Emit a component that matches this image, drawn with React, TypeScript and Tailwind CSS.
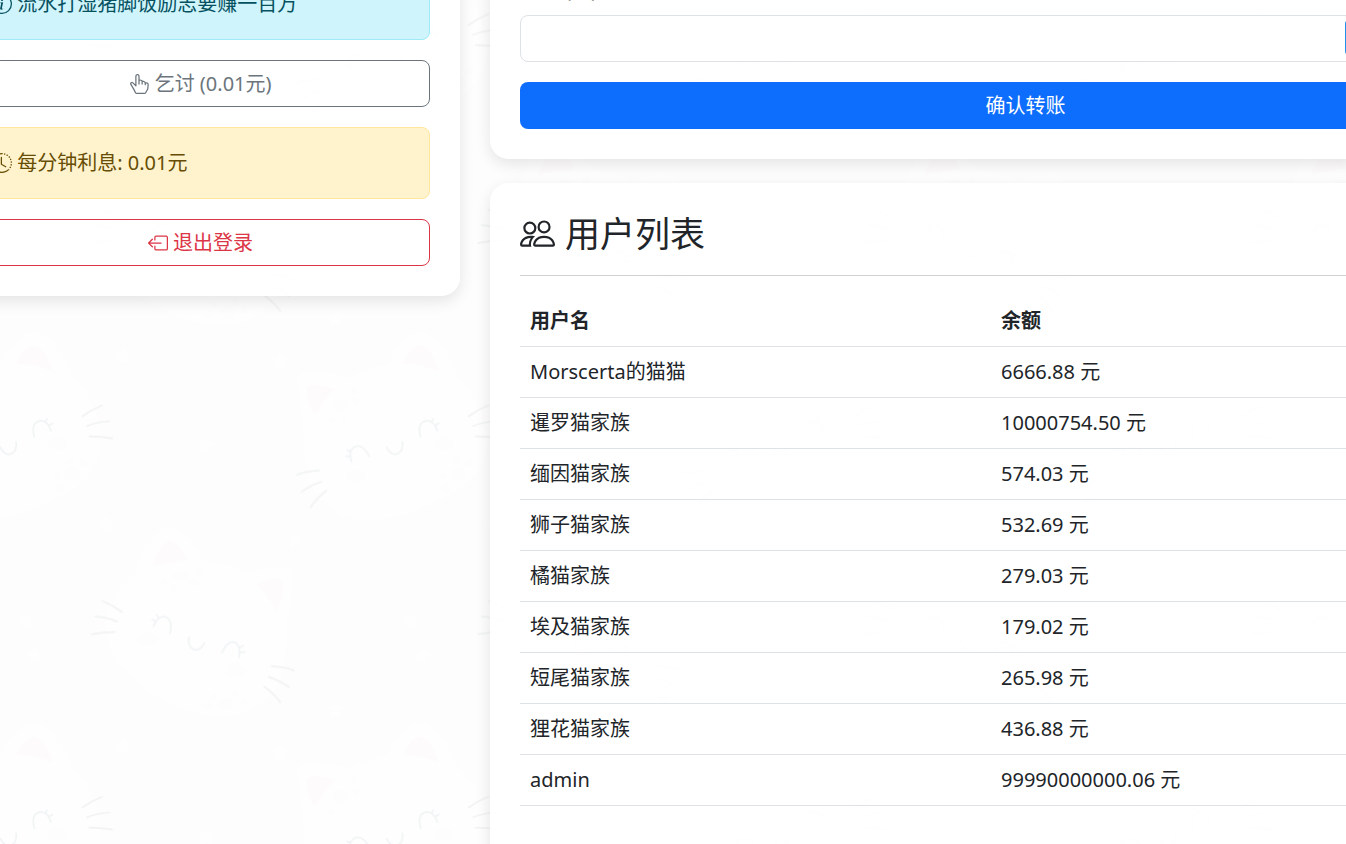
import type { ReactNode } from "react";
import {
  BsBoxArrowLeft,
  BsClockHistory,
  BsHandIndexThumb,
  BsInfoCircle,
  BsPeople,
} from "react-icons/bs";

interface User {
  name: string;
  balance: string;
}

const USERS: User[] = [
  { name: "Morscerta的猫猫", balance: "6666.88" },
  { name: "暹罗猫家族", balance: "10000754.50" },
  { name: "缅因猫家族", balance: "574.03" },
  { name: "狮子猫家族", balance: "532.69" },
  { name: "橘猫家族", balance: "279.03" },
  { name: "埃及猫家族", balance: "179.02" },
  { name: "短尾猫家族", balance: "265.98" },
  { name: "狸花猫家族", balance: "436.88" },
  { name: "admin", balance: "99990000000.06" },
];

const STARS = [
  [370, 165],
  [840, 183],
  [616, 435],
  [318, 670],
  [887, 717],
  [1235, 960],
  [76, 960],
  [105, 1065],
  [1008, 54],
];

// Repeating wallpaper: two sleeping cats and a few stars per tile
function CatWallpaper() {
  return (
    <svg aria-hidden="true" className="absolute inset-0 -z-10 h-full w-full">
      <defs>
        <g id="cats" strokeLinecap="round" strokeLinejoin="round" fill="none">
          <path
            fill="#fefefe"
            d="M892 250Q890 212 930 212Q990 212 1045 232Q1100 205 1160 192Q1200 100 1265 95Q1320 95 1375 225Q1460 310 1462 430Q1460 530 1340 590Q1200 665 1080 662Q960 640 925 540Q910 470 912 410Q905 330 892 250Z"
          />
          <path
            fill="#fefefe"
            d="M400 820Q450 690 505 678Q560 680 612 780Q690 790 735 817Q800 795 850 800Q885 805 880 850Q875 920 862 970Q865 1080 840 1150Q780 1250 660 1250Q500 1240 400 1140Q320 1080 312 960Q320 900 400 820Z"
          />
          <path
            fill="#fefbfc"
            d="M1208 190Q1240 130 1268 138Q1300 155 1315 213Q1260 190 1208 190ZM920 265Q940 245 1003 267Q965 305 945 347Q920 310 920 265ZM456 800Q485 725 510 722Q540 735 562 780Q500 785 456 800ZM768 855Q810 830 845 840Q855 880 828 937Q808 885 768 855Z"
          />
          <g fill="#fdfdfd">
            <ellipse cx="1332" cy="430" rx="28" ry="18" />
            <ellipse cx="1068" cy="528" rx="28" ry="18" />
            <ellipse cx="442" cy="1018" rx="26" ry="20" />
            <ellipse cx="707" cy="1112" rx="27" ry="20" />
            <ellipse cx="1375" cy="522" rx="22" ry="18" />
            <circle cx="1370" cy="484" r="9" />
            <circle cx="1408" cy="486" r="10" />
            <circle cx="1330" cy="528" r="9" />
            <circle cx="1338" cy="563" r="10" />
            <ellipse cx="1022" cy="318" rx="22" ry="20" />
            <circle cx="1058" cy="272" r="9" />
            <circle cx="1068" cy="302" r="8" />
            <circle cx="995" cy="362" r="9" />
            <circle cx="1032" cy="355" r="8" />
            <ellipse cx="680" cy="1212" rx="22" ry="18" />
            <ellipse cx="622" cy="1218" rx="12" ry="8" />
            <circle cx="640" cy="1188" r="8" />
            <circle cx="702" cy="1180" r="9" />
            <circle cx="732" cy="1204" r="9" />
            <ellipse cx="542" cy="828" rx="24" ry="16" />
            <circle cx="492" cy="846" r="10" />
            <circle cx="598" cy="816" r="10" />
            <circle cx="582" cy="848" r="10" />
            <circle cx="522" cy="864" r="9" />
          </g>
          <path
            stroke="#f1f4f5"
            strokeWidth="5"
            d="M1262 411Q1250 368 1280 362Q1302 361 1312 392M1295 366L1300 357M1305 376L1317 370M1055 485Q1042 445 1072 438Q1092 437 1108 469M1052 455L1042 450M1052 468L1039 469M1160 442Q1172 465 1188 463Q1212 457 1207 426M461 979Q472 948 494 950Q520 956 510 1000M464 963L456 957M475 952L470 944M666 1058Q680 1025 700 1026Q724 1032 717 1073M720 1042L730 1037M722 1057L734 1057M567 1012Q562 1045 587 1050Q603 1050 613 1029"
          />
          <path
            stroke="#f2f3f3"
            strokeWidth="5"
            d="M1406 349Q1435 328 1466 316M1420 378Q1450 366 1487 364M1427 409Q1465 409 1496 415M890 525Q920 513 957 512M905 576Q930 556 965 545M932 621Q950 595 979 572M307 903Q340 916 366 936M286 950Q320 952 352 965M276 1003Q310 996 344 996M815 1099Q850 1100 882 1112M807 1131Q845 1145 867 1162M793 1160Q825 1184 841 1207"
          />
        </g>
        <pattern
          id="wallpaper"
          width="1159"
          height="1174"
          patternUnits="userSpaceOnUse"
          patternTransform="translate(0 300) scale(0.3333)"
        >
          <rect width="1159" height="1174" fill="#fdfdfd" />
          {STARS.map(([x, y]) => (
            <path
              key={`${x}-${y}`}
              transform={`translate(${x} ${y})`}
              fill="#fefefe"
              d="M0 -30L9 -11L30 -8L15 8L18 29L0 19L-18 29L-15 8L-30 -8L-9 -11Z"
            />
          ))}
          <use href="#cats" />
          <use href="#cats" x="-1159" />
          <use href="#cats" y="-1174" />
        </pattern>
      </defs>
      <rect width="100%" height="100%" fill="url(#wallpaper)" />
    </svg>
  );
}

function Card({ children }: { children: ReactNode }) {
  return (
    <section className="rounded-[19px] bg-white/90 p-[30px] shadow-[0_5px_15px_rgba(0,0,0,0.1)]">
      {children}
    </section>
  );
}

function AccountPanel() {
  return (
    <Card>
      <div className="flex flex-col gap-5">
        <div className="rounded-lg border border-[#9eeaf9] bg-[#cff4fc] p-5 text-[#055160]">
          <BsInfoCircle className="inline align-[-3px]" /> 流水打湿猪脚饭励志要赚一百万
        </div>
        <button
          type="button"
          className="rounded-lg border border-[#6c757d] px-4 py-2 leading-[29px] text-[#6c757d]"
        >
          <BsHandIndexThumb className="inline align-[-3px]" /> 乞讨 (0.01元)
        </button>
        <div className="rounded-lg border border-[#ffe69c] bg-[#fff3cd] p-5 text-[#664d03]">
          <BsClockHistory className="inline align-[-3px]" /> 每分钟利息: 0.01元
        </div>
        <button
          type="button"
          className="rounded-lg border border-[#dc3545] px-4 py-2 leading-[29px] text-[#dc3545]"
        >
          <BsBoxArrowLeft className="inline align-[-3px]" /> 退出登录
        </button>
      </div>
    </Card>
  );
}

function TransferForm() {
  return (
    <Card>
      <form onSubmit={(e) => e.preventDefault()}>
        <label htmlFor="amount" className="mb-[10px] block">
          金额 (元)
        </label>
        <div className="relative mb-5">
          <input
            id="amount"
            type="number"
            className="block h-[47px] w-full rounded-lg border border-[#dee2e6] bg-white px-4"
          />
          <span className="absolute top-[5px] right-[150px] h-[35px] w-9 rounded-sm border-2 border-[#2492ed]" />
        </div>
        <button
          type="submit"
          className="block h-[47px] w-full rounded-lg bg-[#0d6efd] text-white"
        >
          确认转账
        </button>
      </form>
    </Card>
  );
}

function UserList() {
  return (
    <Card>
      <h2 className="text-[35px] leading-[42px]">
        <BsPeople className="mr-px inline align-[-4px]" /> 用户列表
      </h2>
      <hr className="my-5 border-[#d0d1d2]" />
      <table className="w-full text-left">
        <thead>
          <tr className="border-b border-[#dee2e6]">
            <th className="w-[471px] p-[10px] font-bold">用户名</th>
            <th className="p-[10px] font-bold">余额</th>
          </tr>
        </thead>
        <tbody>
          {USERS.map((user) => (
            <tr key={user.name} className="border-b border-[#dee2e6]">
              <td className="p-[10px]">{user.name}</td>
              <td className="p-[10px]">{user.balance} 元</td>
            </tr>
          ))}
        </tbody>
      </table>
      <div className="h-20" />
    </Card>
  );
}

export default function App() {
  return (
    <div className="relative isolate h-screen overflow-hidden font-['Noto_Sans','Noto_Sans_CJK_SC',sans-serif] text-[20px] leading-[30px] text-[#212529]">
      <CatWallpaper />
      <main className="-mt-[62px] -mr-[215px] -ml-[59px] grid grid-cols-[519px_1fr] items-start gap-[30px]">
        <AccountPanel />
        <div className="mt-[7px] flex flex-col gap-6">
          <TransferForm />
          <UserList />
        </div>
      </main>
    </div>
  );
}
